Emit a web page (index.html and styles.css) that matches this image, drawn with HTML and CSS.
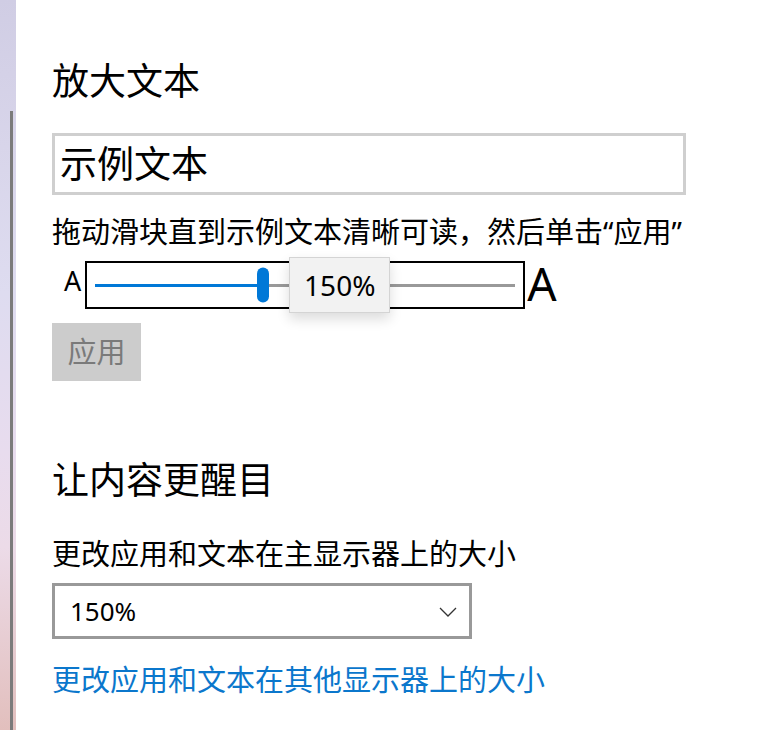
FILE: index.html
```html
<!DOCTYPE html>
<html lang="zh-CN">
  <head>
    <meta charset="UTF-8" />
    <meta name="viewport" content="width=device-width, initial-scale=1.0" />
    <title>文本大小</title>
    <link rel="stylesheet" href="styles.css">
  </head>
  <body>
    <div class="window">
      <div class="edge">
        <div class="edge-scroll"></div>
      </div>

      <main class="content">
        <section class="group">
          <h2 class="group-title">放大文本</h2>
          <div class="sample">示例文本</div>
          <p class="hint">拖动滑块直到示例文本清晰可读，然后单击“应用”</p>

          <div class="scale-row">
            <span class="a-small">A</span>
            <div class="slider">
              <div class="track">
                <div class="track-fill" style="width: 40%"></div>
                <div class="thumb" style="left: 40%"></div>
              </div>
              <div class="tip">150%</div>
            </div>
            <span class="a-big">A</span>
          </div>

          <button class="apply-btn" disabled>应用</button>
        </section>

        <section class="group second">
          <h2 class="group-title">让内容更醒目</h2>
          <p class="label">更改应用和文本在主显示器上的大小</p>
          <div class="select">
            <span class="select-value">150%</span>
            <svg class="chevron" width="18" height="10" viewBox="0 0 18 10">
              <polyline points="1,1 9,9 17,1" fill="none" stroke="#333" stroke-width="1.3" />
            </svg>
          </div>
          <a class="link" href="#">更改应用和文本在其他显示器上的大小</a>
        </section>
      </main>
    </div>
  </body>
</html>
```

FILE: styles.css
```css
* {
  margin: 0;
  padding: 0;
  box-sizing: border-box;
}

body {
  font-family: "Noto Sans", "Noto Sans CJK SC", sans-serif;
  background-color: #fff;
  color: #000;
  width: 784px;
  height: 730px;
  overflow: hidden;
}

.window {
  display: flex;
  height: 100%;
}

/* 왼쪽 배경 띠 + 스크롤바 */
.edge {
  width: 16px;
  flex-shrink: 0;
  background: linear-gradient(
    to bottom,
    #d0cde4 0%,
    #d8d5ea 20%,
    #dedcf0 40%,
    #e8dcee 62%,
    #ecdbe8 75%,
    #e2bfbd 100%
  );
  padding-top: 111px;
  padding-left: 10px;
}

.edge-scroll {
  width: 3px;
  height: 100%;
  background-color: #7b7b7b;
}

.content {
  flex: 1;
  padding: 59px 0 0 36px;
}

.group-title {
  font-size: 37px;
  font-weight: 400;
  line-height: 44px;
}

.sample {
  margin-top: 30px;
  width: 634px;
  height: 62px;
  border: 3px solid #cfcfcf;
  font-size: 37px;
  line-height: 56px;
  padding-left: 5px;
}

.hint {
  margin-top: 19px;
  font-size: 29px;
  line-height: 36px;
}

.scale-row {
  margin-top: 11px;
  display: flex;
  align-items: center;
}

.a-small {
  font-size: 27px;
  line-height: 30px;
  margin-left: 12px;
  margin-right: 4px;
  margin-top: -8px;
}

.slider {
  position: relative;
  width: 440px;
  height: 48px;
  border: 2px solid #000;
  padding: 0 8px 0 8px;
  display: flex;
  align-items: center;
}

.track {
  position: relative;
  flex: 1;
  height: 3px;
  background-color: #999;
}

.track-fill {
  height: 100%;
  background-color: #0078d7;
}

.thumb {
  position: absolute;
  top: 50%;
  width: 12px;
  height: 35px;
  border-radius: 6px;
  background-color: #0078d7;
  transform: translate(-50%, -50%);
}

.tip {
  position: absolute;
  left: 202px;
  top: -6px;
  width: 101px;
  height: 56px;
  background-color: #f2f2f2;
  border: 1px solid #d4d4d4;
  box-shadow: 0 6px 12px rgba(0, 0, 0, 0.14);
  font-size: 28px;
  line-height: 54px;
  text-align: center;
  z-index: 2;
}

.a-big {
  font-size: 46px;
  line-height: 50px;
  margin-left: 2px;
  margin-top: -4px;
}

.apply-btn {
  margin-top: 14px;
  width: 89px;
  height: 58px;
  border: none;
  background-color: #cccccc;
  color: #7a7a7a;
  font-family: inherit;
  font-size: 29px;
  line-height: 58px;
}

.second {
  margin-top: 77px;
}

.label {
  margin-top: 34px;
  font-size: 29px;
  line-height: 36px;
}

.select {
  margin-top: 11px;
  width: 420px;
  height: 56px;
  border: 3px solid #999;
  display: flex;
  align-items: center;
  justify-content: space-between;
  padding: 0 12px 0 15px;
}

.select-value {
  font-size: 26px;
}

.chevron {
  margin-top: 2px;
}

.link {
  display: block;
  margin-top: 23px;
  font-size: 29px;
  line-height: 36px;
  color: #0b77cc;
  text-decoration: none;
}
```
